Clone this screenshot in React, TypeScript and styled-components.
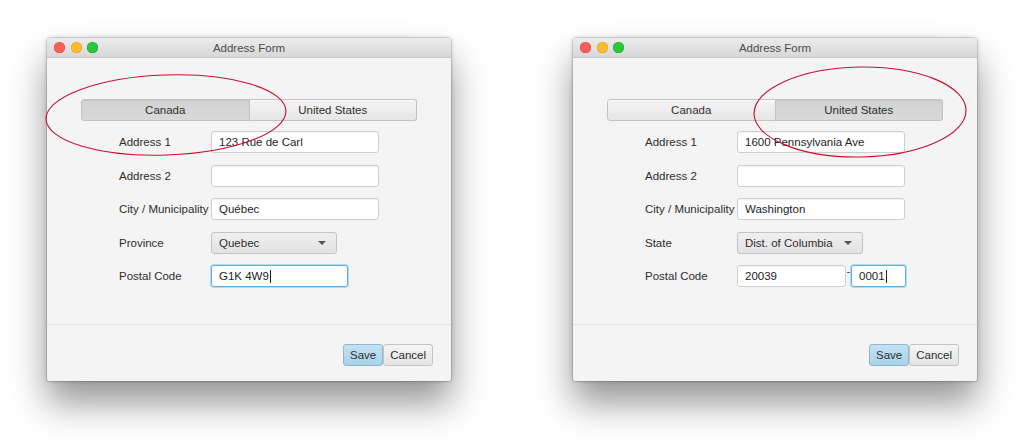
import React from 'react';
import styled, { createGlobalStyle } from 'styled-components';

const GlobalStyle = createGlobalStyle`
  html, body {
    margin: 0;
    padding: 0;
    background: #ffffff;
  }
  body {
    font-family: "Liberation Sans", Arial, sans-serif;
    width: 1024px;
    height: 440px;
    overflow: hidden;
  }
`;

const Stage = styled.div`
  display: flex;
  gap: 122px;
  padding: 38px 0 0 47px;
`;

const Window = styled.div`
  position: relative;
  width: 404px;
  height: 343px;
  display: flex;
  flex-direction: column;
  background: #f4f4f4;
  border-radius: 4px 4px 2px 2px;
  box-shadow: 0 22px 36px rgba(0, 0, 0, 0.42), 0 0 4px rgba(0, 0, 0, 0.22),
    0 0 0 1px rgba(0, 0, 0, 0.1);
`;

const TitleBar = styled.div`
  height: 19px;
  display: grid;
  grid-template-columns: 1fr auto 1fr;
  align-items: center;
  background: linear-gradient(#ececec, #d8d8d8);
  border-bottom: 1px solid #c6c6c6;
  border-radius: 4px 4px 0 0;
`;

const Lights = styled.div`
  display: flex;
  gap: 5.5px;
  padding-left: 7px;
`;

const Light = styled.span<{ $color: string; $ring: string }>`
  width: 11px;
  height: 11px;
  border-radius: 50%;
  background: ${(p) => p.$color};
  box-shadow: inset 0 0 0 0.5px ${(p) => p.$ring};
`;

const Title = styled.div`
  font-size: 11.5px;
  color: #4c4c4c;
`;

const Body = styled.div`
  flex: 1;
  display: flex;
  flex-direction: column;
  padding-top: 41px;
`;

const Tabs = styled.div`
  display: flex;
  margin: 0 34px;
`;

const Tab = styled.div<{ $selected?: boolean }>`
  flex: 1;
  height: 20px;
  display: flex;
  align-items: center;
  justify-content: center;
  font-size: 11.5px;
  color: #2e2e2e;
  border: 1px solid #c2c2c2;
  background: ${(p) =>
    p.$selected ? 'linear-gradient(#d3d3d3, #d9d9d9)' : 'linear-gradient(#f4f4f4, #e6e6e6)'};
  box-shadow: ${(p) =>
    p.$selected ? 'inset 0 1px 1px rgba(0,0,0,0.06)' : 'inset 0 1px 0 rgba(255,255,255,0.8)'};
  &:first-child {
    border-radius: 3px 0 0 3px;
  }
  &:last-child {
    border-radius: 0 3px 3px 0;
    border-left: none;
  }
`;

const Form = styled.div`
  display: grid;
  grid-template-columns: 92px auto;
  grid-auto-rows: 22px;
  row-gap: 11.5px;
  margin: 10px 0 0 72px;
  justify-content: start;
`;

const Label = styled.div`
  display: flex;
  align-items: center;
  font-size: 11.5px;
  color: #2e2e2e;
  white-space: nowrap;
`;

const Field = styled.div<{ $width: number; $focused?: boolean }>`
  box-sizing: border-box;
  width: ${(p) => p.$width}px;
  height: 22px;
  display: flex;
  align-items: center;
  padding-left: 7px;
  font-size: 11.5px;
  color: #1e1e1e;
  background: #fff;
  border: 1px solid ${(p) => (p.$focused ? '#58b4e2' : '#cfcfcf')};
  border-radius: 3px;
  box-shadow: ${(p) =>
    p.$focused
      ? '0 0 0 1px rgba(120, 196, 236, 0.55)'
      : 'inset 0 1px 1px rgba(0,0,0,0.05)'};
`;

const Caret = styled.span`
  display: inline-block;
  width: 1px;
  height: 13px;
  margin-left: 1px;
  background: #222;
`;

const Combo = styled.div<{ $width: number }>`
  box-sizing: border-box;
  width: ${(p) => p.$width}px;
  height: 22px;
  display: flex;
  align-items: center;
  justify-content: space-between;
  padding: 0 10px 0 7px;
  font-size: 11.5px;
  color: #2e2e2e;
  border: 1px solid #c4c4c4;
  border-radius: 3px;
  background: linear-gradient(#f0f0f0, #e2e2e2);
`;

const Arrow = styled.span`
  width: 0;
  height: 0;
  border-left: 4px solid transparent;
  border-right: 4px solid transparent;
  border-top: 4px solid #555;
`;

const Split = styled.div`
  display: flex;
  align-items: center;
`;

const Dash = styled.span`
  width: 5px;
  height: 22px;
  overflow: hidden;
  font-size: 11.5px;
  line-height: 12px;
  color: #444;
  text-align: center;
`;

const Footer = styled.div`
  margin-top: auto;
  height: 57px;
  box-sizing: border-box;
  border-top: 1px solid #e0e0e0;
  display: flex;
  justify-content: flex-end;
  align-items: flex-start;
  padding: 19px 18px 0 0;
`;

const Button = styled.div<{ $primary?: boolean }>`
  box-sizing: border-box;
  height: 22px;
  padding: 0 6px;
  display: flex;
  align-items: center;
  font-size: 11.5px;
  color: #2e2e2e;
  border: 1px solid ${(p) => (p.$primary ? '#8fb8cf' : '#c4c4c4')};
  border-radius: 3px;
  background: ${(p) =>
    p.$primary ? 'linear-gradient(#c4e2f2, #a8d2ea)' : 'linear-gradient(#f6f6f6, #e4e4e4)'};
`;

const Ring = styled.svg`
  position: absolute;
  left: 0;
  top: 0;
  overflow: visible;
  pointer-events: none;
`;

type AddressWindowProps = {
  selected: 'ca' | 'us';
  address1: string;
  city: string;
  regionLabel: string;
  region: string;
  comboWidth: number;
  ring: { cx: number; cy: number; rx: number; ry: number; rot: number };
};

const AddressWindow = (props: AddressWindowProps) => {
  const { ring } = props;
  return (
    <Window>
      <TitleBar>
        <Lights>
          <Light $color="#fc5f57" $ring="#de4a42" />
          <Light $color="#fdbb2e" $ring="#dea123" />
          <Light $color="#2ac840" $ring="#1daa2e" />
        </Lights>
        <Title>Address Form</Title>
        <div />
      </TitleBar>
      <Body>
        <Tabs>
          <Tab $selected={props.selected === 'ca'}>Canada</Tab>
          <Tab $selected={props.selected === 'us'}>United States</Tab>
        </Tabs>
        <Form>
          <Label>Address 1</Label>
          <Field $width={168}>{props.address1}</Field>
          <Label>Address 2</Label>
          <Field $width={168} />
          <Label>City / Municipality</Label>
          <Field $width={168}>{props.city}</Field>
          <Label>{props.regionLabel}</Label>
          <Combo $width={props.comboWidth}>
            {props.region}
            <Arrow />
          </Combo>
          <Label>Postal Code</Label>
          {props.selected === 'ca' ? (
            <Field $width={137} $focused>
              G1K 4W9
              <Caret />
            </Field>
          ) : (
            <Split>
              <Field $width={109}>20039</Field>
              <Dash>-</Dash>
              <Field $width={55} $focused>
                0001
                <Caret />
              </Field>
            </Split>
          )}
        </Form>
        <Footer>
          <Button $primary>Save</Button>
          <Button>Cancel</Button>
        </Footer>
      </Body>
      <Ring width="404" height="343">
        <ellipse
          cx={ring.cx}
          cy={ring.cy}
          rx={ring.rx}
          ry={ring.ry}
          transform={`rotate(${ring.rot} ${ring.cx} ${ring.cy})`}
          fill="none"
          stroke="#c8102e"
          strokeWidth="1.1"
        />
      </Ring>
    </Window>
  );
};

export default function App() {
  return (
    <>
      <GlobalStyle />
      <Stage>
        <AddressWindow
          selected="ca"
          address1="123 Rue de Carl"
          city="Québec"
          regionLabel="Province"
          region="Quebec"
          comboWidth={126}
          ring={{ cx: 119, cy: 77, rx: 120, ry: 40, rot: -2 }}
        />
        <AddressWindow
          selected="us"
          address1="1600 Pennsylvania Ave"
          city="Washington"
          regionLabel="State"
          region="Dist. of Columbia"
          comboWidth={126}
          ring={{ cx: 287, cy: 74, rx: 106, ry: 45, rot: -1 }}
        />
      </Stage>
    </>
  );
}
